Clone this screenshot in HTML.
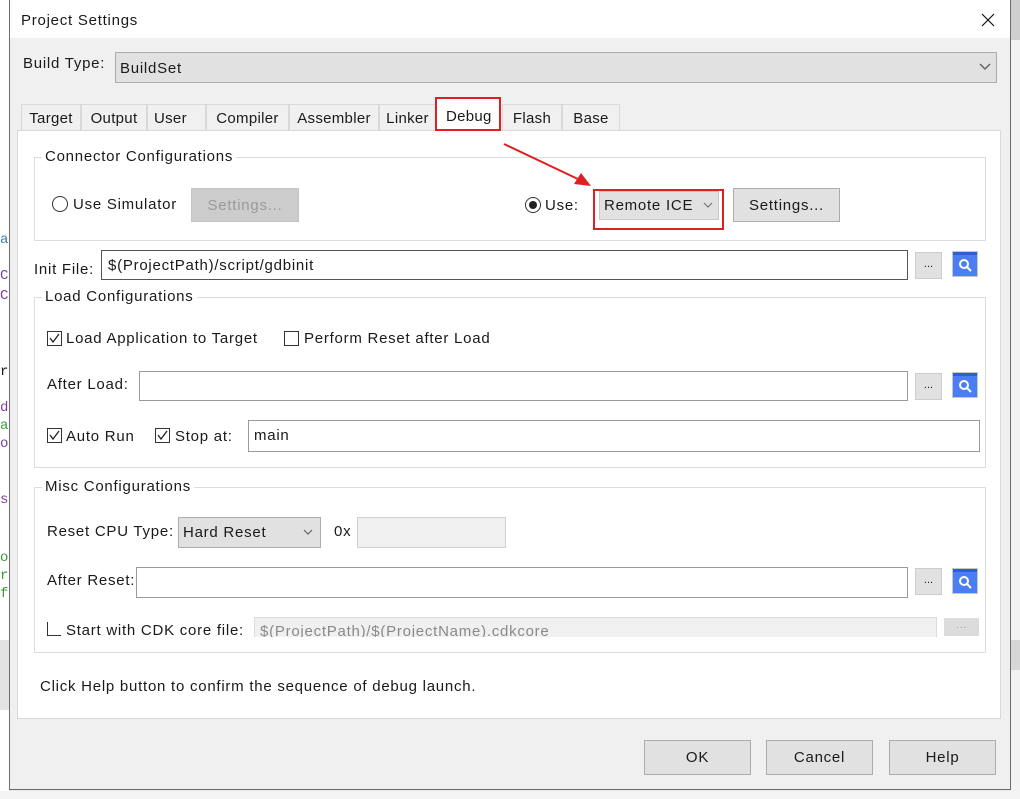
<!DOCTYPE html>
<html><head><meta charset="utf-8"><style>
*{margin:0;padding:0;box-sizing:border-box}
body{width:1020px;height:799px;background:#e9e9e9;font-family:"Liberation Sans","Noto Sans CJK SC",sans-serif;font-size:15px;color:#1a1a1a;position:relative;overflow:hidden;letter-spacing:0.75px}
.a{position:absolute}
.t{position:absolute;white-space:nowrap;line-height:21px}
.btn{position:absolute;background:#e1e1e1;border:1px solid #adadad;text-align:center;line-height:33px}
.inp{position:absolute;background:#fff;border:1px solid #7a7a7a}
.grp{position:absolute;border:1px solid #dcdcdc}
.gt{position:absolute;background:#fff;padding:0 3px;white-space:nowrap;line-height:20px}
.cb{position:absolute;width:15px;height:15px;border:1px solid #333;background:#fff}
.dots{position:absolute;width:27px;height:27px;background:#e1e1e1;border:1px solid #ccc;font-size:11px;text-align:center;line-height:22px;letter-spacing:0}
.srch{position:absolute;width:26px;height:26px;border:1px solid #c8c8c8;background:#4a7ef2;box-shadow:inset 0 3px 0 #2d5fd0}
.tab{position:absolute;top:104px;height:26px;background:#f0f0f0;border:1px solid #d9d9d9;border-bottom:none;text-align:center;line-height:28px;letter-spacing:0.3px}
</style></head><body>
<div class="a" style="left:0;top:0;width:9px;height:799px;background:#fff"></div>
<div class="a" style="left:0;top:640px;width:9px;height:70px;background:#e3e3e3"></div>
<div class="a" style="left:1011px;top:0;width:9px;height:799px;background:#f2f2f2"></div>
<div class="a" style="left:1011px;top:0;width:9px;height:40px;background:#cfcfcf"></div>
<div class="a" style="left:1011px;top:640px;width:9px;height:30px;background:#d6d6d6"></div>
<div class="a" style="left:0;top:791px;width:1020px;height:8px;background:#f4f4f4"></div>
<div class="t" style="left:0;top:230px;color:#3a7aa8;font-family:'Liberation Mono';font-size:14px">a</div>
<div class="t" style="left:0;top:266px;color:#7a3ea0;font-family:'Liberation Mono';font-size:14px">C</div>
<div class="t" style="left:0;top:286px;color:#7a3ea0;font-family:'Liberation Mono';font-size:14px">C</div>
<div class="t" style="left:0;top:362px;font-family:'Liberation Mono';font-size:14px">r</div>
<div class="t" style="left:0;top:398px;color:#7a3ea0;font-family:'Liberation Mono';font-size:14px">d</div>
<div class="t" style="left:0;top:416px;color:#3a9a3a;font-family:'Liberation Mono';font-size:14px">a</div>
<div class="t" style="left:0;top:434px;color:#7a3ea0;font-family:'Liberation Mono';font-size:14px">o</div>
<div class="t" style="left:0;top:490px;color:#7a3ea0;font-family:'Liberation Mono';font-size:14px">s</div>
<div class="t" style="left:0;top:548px;color:#3a9a3a;font-family:'Liberation Mono';font-size:14px">o</div>
<div class="t" style="left:0;top:566px;color:#3a9a3a;font-family:'Liberation Mono';font-size:14px">r</div>
<div class="t" style="left:0;top:584px;color:#3a9a3a;font-family:'Liberation Mono';font-size:14px">f</div>

<div class="a" style="left:9px;top:-1px;width:1002px;height:791px;background:#f0f0f0;border:1px solid #6b6b6b"></div>
<div class="a" style="left:10px;top:0;width:1000px;height:38px;background:#fff"></div>
<div class="t" style="left:21px;top:10px">Project Settings</div>
<svg class="a" style="left:981px;top:13px" width="14" height="14"><path d="M1 1L13 13M13 1L1 13" stroke="#111" stroke-width="1.2"/></svg>

<div class="t" style="left:23px;top:53px">Build Type:</div>
<div class="a" style="left:115px;top:52px;width:882px;height:31px;background:#e1e1e1;border:1px solid #adadad"></div>
<div class="t" style="left:120px;top:58px">BuildSet</div>
<svg class="a" style="left:979px;top:63px" width="12" height="8"><path d="M1 1L6 6L11 1" stroke="#666" stroke-width="1.5" fill="none"/></svg>

<div class="a" style="left:17px;top:130px;width:984px;height:589px;background:#fff;border:1px solid #d9d9d9"></div>
<div class="tab" style="left:21px;width:60px">Target</div>
<div class="tab" style="left:81px;width:66px">Output</div>
<div class="tab" style="left:147px;width:59px;text-align:left;padding-left:6px">User</div>
<div class="tab" style="left:206px;width:83px">Compiler</div>
<div class="tab" style="left:289px;width:90px">Assembler</div>
<div class="tab" style="left:379px;width:57px">Linker</div>
<div class="a" style="left:436px;top:99px;width:65px;height:33px;background:#fff"></div>
<div class="t" style="left:446px;top:106px;letter-spacing:0.3px">Debug</div>
<div class="a" style="left:435px;top:97px;width:66px;height:34px;border:2px solid #e02020"></div>
<div class="tab" style="left:502px;width:60px">Flash</div>
<div class="tab" style="left:562px;width:58px">Base</div>

<div class="grp" style="left:34px;top:157px;width:952px;height:84px"></div>
<div class="gt" style="left:42px;top:147px">Connector Configurations</div>
<div class="a" style="left:52px;top:196px;width:16px;height:16px;border:1px solid #333;border-radius:50%"></div>
<div class="t" style="left:73px;top:194px">Use Simulator</div>
<div class="a" style="left:191px;top:188px;width:108px;height:34px;background:#cccccc;border:1px solid #c4c4c4;color:#9a9a9a;text-align:center;line-height:34px">Settings...</div>
<div class="a" style="left:525px;top:197px;width:16px;height:16px;border:1px solid #333;border-radius:50%"></div>
<div class="a" style="left:529px;top:201px;width:8px;height:8px;background:#222;border-radius:50%"></div>
<div class="t" style="left:545px;top:195px">Use:</div>
<div class="a" style="left:599px;top:191px;width:120px;height:29px;background:#e1e1e1;border:1px solid #c8c8c8"></div>
<div class="t" style="left:604px;top:195px">Remote ICE</div>
<svg class="a" style="left:703px;top:202px" width="10" height="7"><path d="M1 1L5 5L9 1" stroke="#777" stroke-width="1.2" fill="none"/></svg>
<div class="a" style="left:593px;top:189px;width:131px;height:41px;border:2px solid #e02020"></div>
<div class="btn" style="left:733px;top:188px;width:107px;height:34px">Settings...</div>
<svg class="a" style="left:500px;top:140px" width="95" height="50"><path d="M4 4L80 40" stroke="#e02020" stroke-width="2"/><path d="M91 46L74 44L81 33Z" fill="#e02020"/></svg>

<div class="t" style="left:34px;top:259px">Init File:</div>
<div class="inp" style="left:101px;top:250px;width:807px;height:30px;border-color:#555"></div>
<div class="t" style="left:108px;top:255px">$(ProjectPath)/script/gdbinit</div>
<div class="dots" style="left:915px;top:252px">...</div>
<div class="srch" style="left:952px;top:251px"><svg width="24" height="24"><circle cx="11" cy="12" r="4" stroke="#fff" stroke-width="2" fill="none"/><path d="M14 15L18 19" stroke="#fff" stroke-width="2"/></svg></div>

<div class="grp" style="left:34px;top:297px;width:952px;height:171px"></div>
<div class="gt" style="left:42px;top:287px">Load Configurations</div>
<div class="cb" style="left:47px;top:331px"><svg width="13" height="13" style="display:block"><path d="M2 6L5 10L11 2" stroke="#222" stroke-width="1.3" fill="none"/></svg></div>
<div class="t" style="left:66px;top:328px">Load Application to Target</div>
<div class="cb" style="left:284px;top:331px"></div>
<div class="t" style="left:304px;top:328px">Perform Reset after Load</div>
<div class="t" style="left:47px;top:374px">After Load:</div>
<div class="inp" style="left:139px;top:371px;width:769px;height:30px;border-color:#9a9a9a"></div>
<div class="dots" style="left:915px;top:373px">...</div>
<div class="srch" style="left:952px;top:372px"><svg width="24" height="24"><circle cx="11" cy="12" r="4" stroke="#fff" stroke-width="2" fill="none"/><path d="M14 15L18 19" stroke="#fff" stroke-width="2"/></svg></div>
<div class="cb" style="left:47px;top:428px"><svg width="13" height="13" style="display:block"><path d="M2 6L5 10L11 2" stroke="#222" stroke-width="1.3" fill="none"/></svg></div>
<div class="t" style="left:66px;top:426px">Auto Run</div>
<div class="cb" style="left:155px;top:428px"><svg width="13" height="13" style="display:block"><path d="M2 6L5 10L11 2" stroke="#222" stroke-width="1.3" fill="none"/></svg></div>
<div class="t" style="left:175px;top:426px">Stop at:</div>
<div class="inp" style="left:248px;top:420px;width:732px;height:32px;border-color:#9a9a9a"></div>
<div class="t" style="left:254px;top:425px">main</div>

<div class="grp" style="left:34px;top:487px;width:952px;height:166px"></div>
<div class="gt" style="left:42px;top:477px">Misc Configurations</div>
<div class="t" style="left:47px;top:521px">Reset CPU Type:</div>
<div class="a" style="left:178px;top:517px;width:143px;height:31px;background:#e1e1e1;border:1px solid #adadad"></div>
<div class="t" style="left:183px;top:522px">Hard Reset</div>
<svg class="a" style="left:303px;top:529px" width="10" height="7"><path d="M1 1L5 5L9 1" stroke="#666" stroke-width="1.2" fill="none"/></svg>
<div class="t" style="left:334px;top:521px">0x</div>
<div class="a" style="left:357px;top:517px;width:149px;height:31px;background:#f0f0f0;border:1px solid #d0d0d0"></div>
<div class="t" style="left:47px;top:570px">After Reset:</div>
<div class="inp" style="left:136px;top:567px;width:772px;height:31px;border-color:#9a9a9a"></div>
<div class="dots" style="left:915px;top:568px">...</div>
<div class="srch" style="left:952px;top:568px"><svg width="24" height="24"><circle cx="11" cy="12" r="4" stroke="#fff" stroke-width="2" fill="none"/><path d="M14 15L18 19" stroke="#fff" stroke-width="2"/></svg></div>
<div class="a" style="left:47px;top:622px;width:14px;height:14px;border-left:1px solid #333;border-bottom:1px solid #333"></div>
<div class="t" style="left:66px;top:620px">Start with CDK core file:</div>
<div class="a" style="left:254px;top:617px;width:683px;height:20px;background:#f0f0f0;border:1px solid #dcdcdc;border-bottom:none;overflow:hidden"><div class="t" style="left:5px;top:3px;color:#8a8a8a">$(ProjectPath)/$(ProjectName).cdkcore</div></div>
<div class="a" style="left:944px;top:618px;width:35px;height:18px;background:#dcdcdc;color:#999;font-size:10px;text-align:center;line-height:16px">...</div>

<div class="t" style="left:40px;top:676px">Click Help button to confirm the sequence of debug launch.</div>

<div class="btn" style="left:644px;top:740px;width:107px;height:35px">OK</div>
<div class="btn" style="left:766px;top:740px;width:107px;height:35px">Cancel</div>
<div class="btn" style="left:889px;top:740px;width:107px;height:35px">Help</div>
</body></html>
